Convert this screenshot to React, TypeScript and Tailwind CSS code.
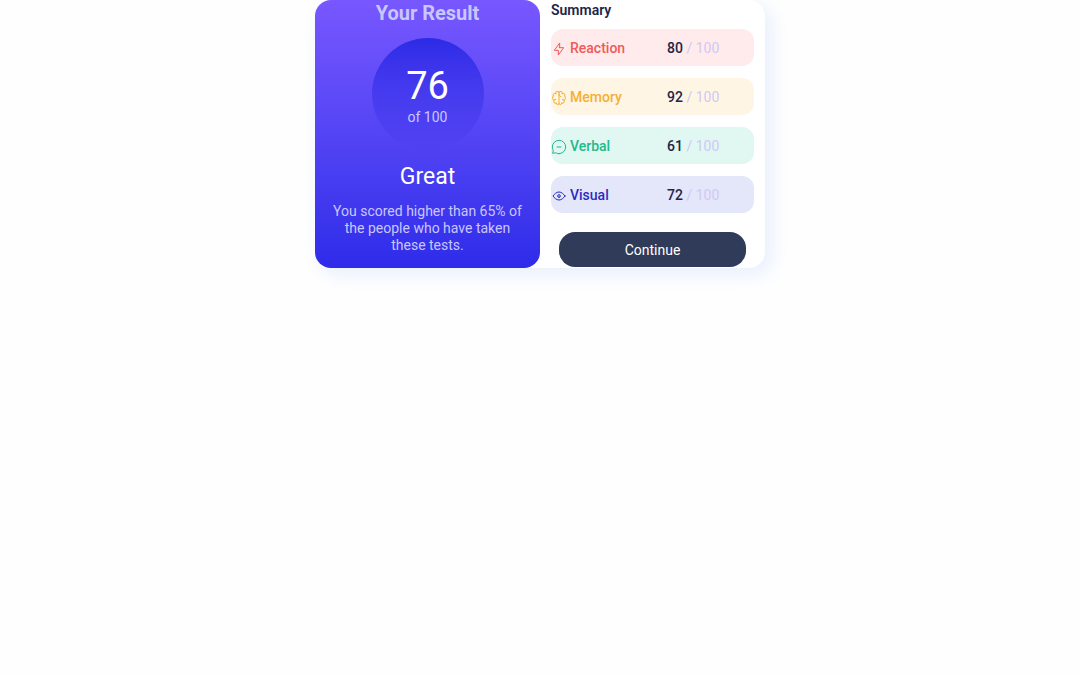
import { ReactNode } from 'react'

type Category = {
  name: string
  score: number
  icon: ReactNode
  classes: string
}

const categories: Category[] = [
  {
    name: 'Reaction',
    score: 80,
    classes: 'bg-[#ffebeb] text-[#f05a5a]',
    icon: (
      <path d="M10.833 8.333V2.5l-6.666 9.167h5V17.5l6.666-9.167h-5Z" />
    )
  },
  {
    name: 'Memory',
    score: 92,
    classes: 'bg-[#fff5e5] text-[#f5b02e]',
    icon: (
      <>
        <path d="M5.833 11.667a2.5 2.5 0 1 0 .834 4.858" />
        <path d="M3.553 13.004a3.333 3.333 0 0 1-.728-5.53m.025-.067a2.083 2.083 0 0 1 2.983-2.824m.199.054A2.083 2.083 0 1 1 10 3.75v12.917a1.667 1.667 0 0 1-3.333 0M10 5.833a2.5 2.5 0 0 0 2.5 2.5m1.667 3.334a2.5 2.5 0 1 1-.834 4.858" />
        <path d="M16.447 13.004a3.334 3.334 0 0 0 .728-5.53m-.025-.067a2.083 2.083 0 0 0-2.983-2.824M10 3.75a2.085 2.085 0 0 1 2.538-2.033 2.084 2.084 0 0 1 1.43 2.92m-.635 12.03a1.667 1.667 0 0 1-3.333 0" />
      </>
    )
  },
  {
    name: 'Verbal',
    score: 61,
    classes: 'bg-[#e1f7f1] text-[#22b98c]',
    icon: (
      <path d="M7.5 10h5M10 18.333A8.333 8.333 0 1 0 1.667 10c0 1.518.406 2.942 1.115 4.167l-.699 3.75 3.75-.699A8.295 8.295 0 0 0 10 18.333Z" />
    )
  },
  {
    name: 'Visual',
    score: 72,
    classes: 'bg-[#e4e6fa] text-[#2a2cc0]',
    icon: (
      <>
        <path d="M10 11.667a1.667 1.667 0 1 0 0-3.334 1.667 1.667 0 0 0 0 3.334Z" />
        <path d="M17.5 10c-1.574 2.492-4.402 5-7.5 5s-5.926-2.508-7.5-5C4.416 7.632 6.66 5 10 5s5.584 2.632 7.5 5Z" />
      </>
    )
  }
]

const CategoryRow = ({ name, score, icon, classes }: Category) => (
  <li className={`flex items-center rounded-xl pt-[9px] pb-[7px] ${classes}`}>
    <div className="flex flex-1 items-center gap-[3px] pr-3">
      <svg
        viewBox="0 0 20 20"
        className="h-4 w-4"
        fill="none"
        stroke="currentColor"
        strokeWidth="1.25"
        strokeLinecap="round"
        strokeLinejoin="round"
        aria-hidden="true"
      >
        {icon}
      </svg>
      <span>{name}</span>
    </div>
    <p className="w-[87px] text-[#1d2547]">
      {score} <span className="font-normal text-[#cfc8f5]">/ 100</span>
    </p>
  </li>
)

const Result = () => (
  <section className="flex w-1/2 flex-col items-center rounded-2xl bg-linear-to-b from-[#7857ff] to-[#2e2be9] px-4 pb-[14px] text-center text-[#c8c7ff]">
    <h1 className="text-xl leading-[26px] font-bold">Your Result</h1>

    <div className="mt-3 flex size-28 flex-col items-center justify-center rounded-full bg-linear-to-b from-[#2d2be6] to-[#4d3df0]/0">
      <p className="pt-1 text-[38px] leading-[42px] text-white">76</p>
      <p className="text-sm leading-5">of 100</p>
    </div>

    <h2 className="mt-3 text-[23px] leading-[29px] text-white">Great</h2>
    <p className="mt-3 text-sm leading-[17px]">
      You scored higher than 65% of the people who have taken these tests.
    </p>
  </section>
)

const Summary = () => (
  <section className="flex w-1/2 flex-col px-[11px] pb-px text-sm font-medium">
    <h2 className="leading-5 font-semibold text-[#1d2547]">Summary</h2>

    <ul className="mt-[9px] space-y-3 leading-[21px]">
      {categories.map((category) => (
        <CategoryRow key={category.name} {...category} />
      ))}
    </ul>

    <button
      type="button"
      className="mx-2 mt-auto rounded-2xl bg-[#303b59] pt-2 pb-[7px] leading-5 font-normal text-white"
    >
      Continue
    </button>
  </section>
)

export default function App() {
  return (
    <main className="flex min-h-screen items-start justify-center bg-[#fefefe] font-['Roboto','Liberation_Sans',sans-serif]">
      <div className="flex w-full max-w-[450px] rounded-2xl bg-white shadow-[6px_6px_20px_#e6eefc]">
        <Result />
        <Summary />
      </div>
    </main>
  )
}
